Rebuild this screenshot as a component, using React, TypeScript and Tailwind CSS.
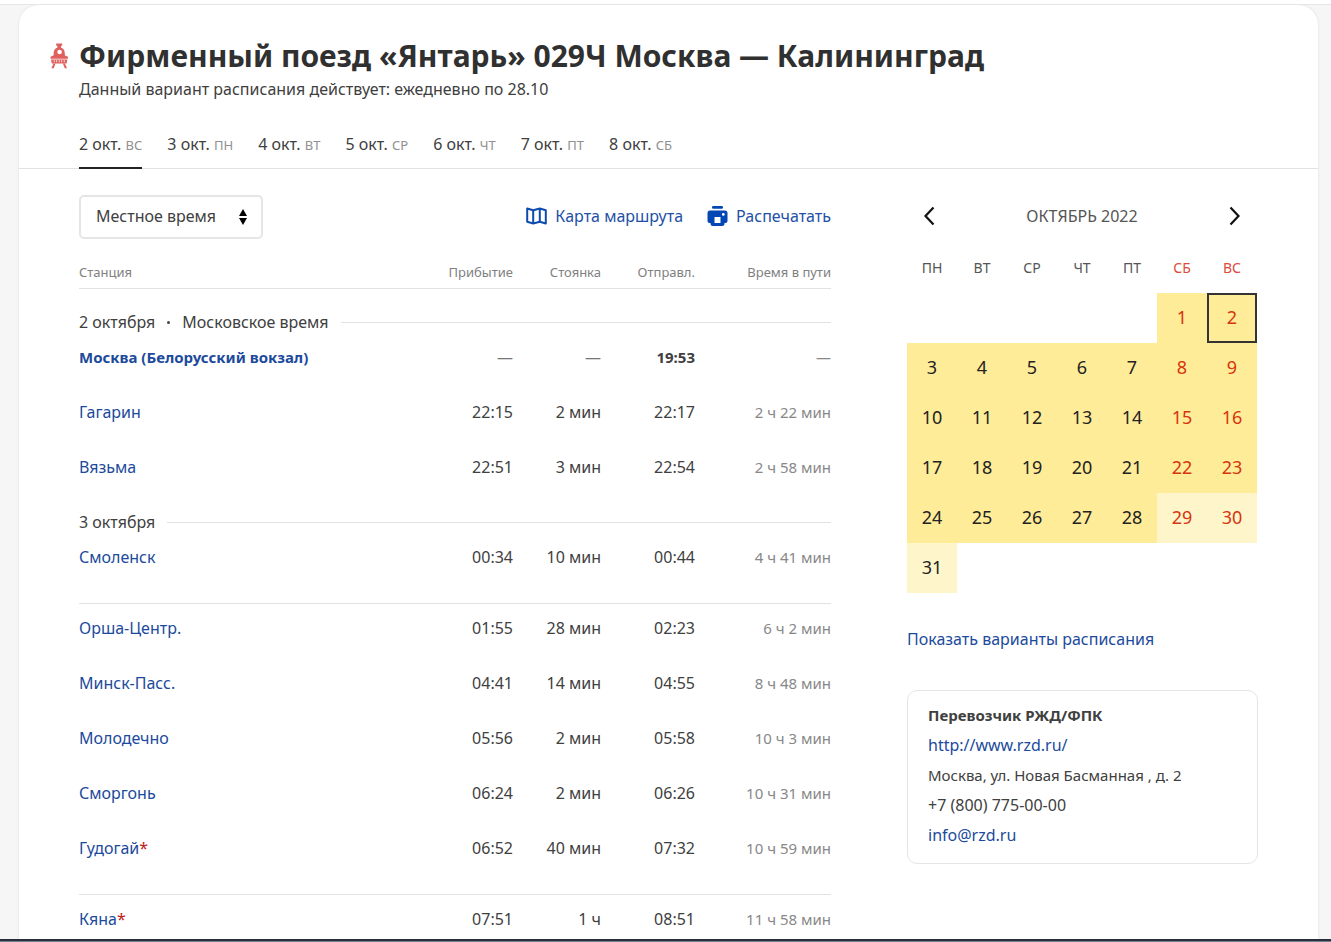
import { Fragment, useState, type ReactNode } from "react";

interface Stop {
  name: string;
  arrival: string;
  stay: string;
  departure: string;
  duration: string;
  main?: boolean;
  marked?: boolean;
}

interface StopGroup {
  date?: string;
  zone?: string;
  stops: Stop[];
}

const days = [
  { date: "2 окт.", weekday: "ВС" },
  { date: "3 окт.", weekday: "ПН" },
  { date: "4 окт.", weekday: "ВТ" },
  { date: "5 окт.", weekday: "СР" },
  { date: "6 окт.", weekday: "ЧТ" },
  { date: "7 окт.", weekday: "ПТ" },
  { date: "8 окт.", weekday: "СБ" },
];

const groups: StopGroup[] = [
  {
    date: "2 октября",
    zone: "Московское время",
    stops: [
      { name: "Москва (Белорусский вокзал)", arrival: "—", stay: "—", departure: "19:53", duration: "—", main: true },
      { name: "Гагарин", arrival: "22:15", stay: "2 мин", departure: "22:17", duration: "2 ч 22 мин" },
      { name: "Вязьма", arrival: "22:51", stay: "3 мин", departure: "22:54", duration: "2 ч 58 мин" },
    ],
  },
  {
    date: "3 октября",
    stops: [{ name: "Смоленск", arrival: "00:34", stay: "10 мин", departure: "00:44", duration: "4 ч 41 мин" }],
  },
  {
    stops: [
      { name: "Орша-Центр.", arrival: "01:55", stay: "28 мин", departure: "02:23", duration: "6 ч 2 мин" },
      { name: "Минск-Пасс.", arrival: "04:41", stay: "14 мин", departure: "04:55", duration: "8 ч 48 мин" },
      { name: "Молодечно", arrival: "05:56", stay: "2 мин", departure: "05:58", duration: "10 ч 3 мин" },
      { name: "Сморгонь", arrival: "06:24", stay: "2 мин", departure: "06:26", duration: "10 ч 31 мин" },
      { name: "Гудогай", arrival: "06:52", stay: "40 мин", departure: "07:32", duration: "10 ч 59 мин", marked: true },
    ],
  },
  {
    stops: [{ name: "Кяна", arrival: "07:51", stay: "1 ч", departure: "08:51", duration: "11 ч 58 мин", marked: true }],
  },
];

const weekdays = ["ПН", "ВТ", "СР", "ЧТ", "ПТ", "СБ", "ВС"];

// October 2022 starts on Saturday
const weeks = Array.from({ length: 6 }, (_, week) =>
  Array.from({ length: 7 }, (_, i) => {
    const day = week * 7 + i - 4;
    return day >= 1 && day <= 31 ? day : null;
  }),
);

function TrainIcon() {
  return (
    <svg className="h-7 w-5 shrink-0" viewBox="0 0 20 28" fill="#e0605e" aria-hidden="true">
      <path d="M7.200 1.500h6v2.200h-1.200v3H8.400v-3H7.200z" />
      <circle cx="10.200" cy="10.700" r="5.500" />
      <path d="M4.700 11h11v5h-11z" />
      <path d="M1.500 16.800v-2l3.200-1.600h11l3.200 1.600v2z" />
      <circle cx="10.600" cy="10" r="2.300" fill="#fff" />
      <path fillRule="evenodd" d="M2 17.600h16.400l-.8 4H2.800zM4.800 18.200v2h.8v-2zm2.500 0v2h.8v-2zm2.500 0v2h.8v-2zm2.500 0v2h.8v-2zm2.500 0v2h.8v-2z" />
      <path d="M4.500 21.500h2L4.700 26.300H2.400zM13.900 21.500h2l2.100 4.800h-2.300z" />
    </svg>
  );
}

function MapIcon() {
  return (
    <svg className="h-5 w-[21px]" viewBox="0 0 21 20" fill="none" stroke="#0d4cad" strokeWidth="2" strokeLinejoin="round" aria-hidden="true">
      <path d="M1.200 2.500l6 1.700 6.600-1.700 6 1.700v13.300l-6-1.700-6.600 1.700-6-1.700z" />
      <path d="M7.200 4.200v13.300M13.800 2.500v13.300" />
    </svg>
  );
}

function PrintIcon() {
  return (
    <svg className="h-5 w-[21px]" viewBox="0 0 21 20" fill="#0347b5" aria-hidden="true">
      <rect x="5" y="0" width="11" height="2.800" rx="1.200" />
      <path
        fillRule="evenodd"
        d="M3 4.500h15a2.500 2.500 0 0 1 2.500 2.500v8a2 2 0 0 1-2 2H17.500v.5a2.500 2.500 0 0 1-2.500 2.500H6A2.500 2.500 0 0 1 3.500 17.500V17h-1a2 2 0 0 1-2-2V7A2.500 2.500 0 0 1 3 4.500zm4.500 6.500V17h6v-6zM16.300 7a1.400 1.400 0 1 0 0 2.800 1.400 1.400 0 0 0 0-2.800z"
      />
    </svg>
  );
}

function Chevron({ path }: { path: string }) {
  return (
    <svg className="h-5 w-3" viewBox="0 0 12 20" fill="none" stroke="#111" strokeWidth="2.2" aria-hidden="true">
      <path d={path} />
    </svg>
  );
}

function Link({ href = "#", children }: { href?: string; children: ReactNode }) {
  return (
    <a href={href} className="text-[#1c4a9c] hover:text-red-600">
      {children}
    </a>
  );
}

function StopRow({ stop }: { stop: Stop }) {
  return (
    <tr className="h-[55px] text-right align-top">
      <th scope="row" className={`pt-[3px] text-left ${stop.main ? "text-[15px] leading-6 font-bold" : "font-normal"}`}>
        <Link>{stop.name}</Link>
        {stop.marked && <span className="text-[#c01818]">*</span>}
      </th>
      <td className={`pt-[3px] ${stop.main ? "text-[#777]" : ""}`}>{stop.arrival}</td>
      <td className={`pt-[3px] ${stop.main ? "text-[#777]" : ""}`}>{stop.stay}</td>
      <td className={`pt-[3px] ${stop.main ? "text-[15px] leading-6 font-bold" : ""}`}>{stop.departure}</td>
      <td className="pt-[3px] text-[15px] leading-6 text-[#888]">{stop.duration}</td>
    </tr>
  );
}

function Timetable() {
  return (
    <table className="mt-5 w-full table-fixed border-collapse">
      <colgroup>
        <col />
        <col className="w-[100px]" />
        <col className="w-[88px]" />
        <col className="w-[94px]" />
        <col className="w-[136px]" />
      </colgroup>
      <thead>
        <tr className="h-[29px] border-b border-[#e2e2e2] text-right align-top text-[13px] text-[#808080]">
          <th scope="col" className="pt-px text-left font-normal">Станция</th>
          <th scope="col" className="pt-px font-normal">Прибытие</th>
          <th scope="col" className="pt-px font-normal">Стоянка</th>
          <th scope="col" className="pt-px font-normal">Отправл.</th>
          <th scope="col" className="pt-px font-normal">Время в пути</th>
        </tr>
      </thead>
      <tbody>
        <tr className="h-[19px]" />
        {groups.map((group, i) => (
          <Fragment key={i}>
            <tr className={group.date ? "h-[35px] align-top" : "h-4 align-top"}>
              {group.date ? (
                <td colSpan={5} className="pt-[3px]">
                  <div className="flex items-center">
                    <span>{group.date}</span>
                    {group.zone && (
                      <>
                        <span className="mx-3 size-[3px] rounded-full bg-[#444]" />
                        <span>{group.zone}</span>
                      </>
                    )}
                    <span className="ml-3 h-px flex-1 bg-[#e2e2e2]" />
                  </div>
                </td>
              ) : (
                <td colSpan={5} className="pt-1.5">
                  <div className="h-px bg-[#e2e2e2]" />
                </td>
              )}
            </tr>
            {group.stops.map((stop) => (
              <StopRow key={stop.name} stop={stop} />
            ))}
          </Fragment>
        ))}
      </tbody>
    </table>
  );
}

function Calendar() {
  const [selected, setSelected] = useState(2);

  return (
    <div className="w-[350px]">
      <div className="flex h-[42px] items-center justify-between px-4">
        <button type="button" aria-label="Предыдущий месяц" className="cursor-pointer">
          <Chevron path="M10.500 1.500L2.500 10l8 8.500" />
        </button>
        <span className="text-[#555]">ОКТЯБРЬ 2022</span>
        <button type="button" aria-label="Следующий месяц" className="cursor-pointer">
          <Chevron path="M1.500 1.500l8 8.500-8 8.500" />
        </button>
      </div>
      <table className="mt-1.5 w-full table-fixed border-collapse text-center">
        <thead>
          <tr className="h-[50px] text-sm text-[#555]">
            {weekdays.map((name, i) => (
              <th key={name} scope="col" className={`font-normal ${i > 4 ? "text-[#dd4b3c]" : ""}`}>
                {name}
              </th>
            ))}
          </tr>
        </thead>
        <tbody>
          {weeks.map((week, w) => (
            <tr key={w} className="h-[50px]">
              {week.map((day, i) => (
                <td key={i} className="p-0">
                  {day && (
                    <button
                      type="button"
                      onClick={() => setSelected(day)}
                      className={`block h-[50px] w-full cursor-pointer border-2 pb-0.5 text-lg ${day > 28 ? "bg-[#fff5cb]" : "bg-[#ffec98]"} ${i > 4 ? "text-[#d5350f]" : "text-[#222]"} ${day === selected ? "border-[#333]" : "border-transparent"}`}
                    >
                      {day}
                    </button>
                  )}
                </td>
              ))}
            </tr>
          ))}
        </tbody>
      </table>
    </div>
  );
}

export default function App() {
  const [activeDay, setActiveDay] = useState(0);

  return (
    <div className="flex h-screen flex-col overflow-hidden bg-[#f6f6f6] font-['Noto_Sans',sans-serif] text-base leading-6 text-[#404040]">
      <div className="h-[5px] shrink-0 border-b border-[#e6e6e6] bg-white" />
      <div className="min-h-0 flex-1 overflow-hidden pr-[13px] pl-[19px]">
        <main className="min-h-full rounded-t-[20px] bg-white shadow-[0_0_3px_rgba(0,0,0,0.1)]">
          <header className="flex items-start gap-2.5 pt-[31px] pl-[30px]">
            <div className="pt-1.5">
              <TrainIcon />
            </div>
            <div>
              <h1 className="text-[30px] leading-10 font-bold text-[#303030]">
                Фирменный поезд «Янтарь» 029Ч Москва — Калининград
              </h1>
              <p className="mt-px">Данный вариант расписания действует: ежедневно по 28.10</p>
            </div>
          </header>

          <nav className="mt-[31px] flex gap-[25px] border-b border-[#e2e2e2] px-[60px]">
            {days.map((day, i) => (
              <button
                key={day.date}
                type="button"
                onClick={() => setActiveDay(i)}
                className={`-mb-px cursor-pointer border-b-2 pb-2.5 ${i === activeDay ? "border-[#222]" : "border-transparent"}`}
              >
                {day.date} <span className="text-[13px] text-[#909090]">{day.weekday}</span>
              </button>
            ))}
          </nav>

          <div className="grid grid-cols-[1fr_351px] gap-[76px] px-[60px] pt-[26px]">
            <section>
              <div className="flex items-center justify-between">
                <div className="relative">
                  <select
                    aria-label="Время"
                    className="h-11 w-[184px] cursor-pointer appearance-none rounded-[5px] border-2 border-[#e5e5e5] bg-white px-[15px] pb-0.5"
                  >
                    <option>Местное время</option>
                    <option>Московское время</option>
                  </select>
                  <svg className="pointer-events-none absolute top-3.5 right-4 h-4 w-2" viewBox="0 0 8 16" aria-hidden="true">
                    <path d="M4 0l4 7H0zM4 16l4-7H0z" />
                  </svg>
                </div>
                <div className="flex items-center gap-6 pb-0.5 text-[#2350a6]">
                  <a href="#" className="flex items-center gap-2">
                    <MapIcon />
                    Карта маршрута
                  </a>
                  <button type="button" className="flex cursor-pointer items-center gap-2">
                    <PrintIcon />
                    Распечатать
                  </button>
                </div>
              </div>
              <Timetable />
            </section>

            <aside>
              <Calendar />
              <p className="mt-[34px]">
                <Link>Показать варианты расписания</Link>
              </p>
              <address className="mt-[39px] flex flex-col gap-1.5 rounded-[10px] border border-[#e5e5e5] px-5 pt-3 pb-4 not-italic">
                <strong className="text-[15px] leading-6">Перевозчик РЖД/ФПК</strong>
                <Link href="http://www.rzd.ru/">http://www.rzd.ru/</Link>
                <span className="text-[15px] leading-6">Москва, ул. Новая Басманная , д. 2</span>
                <span>+7 (800) 775-00-00</span>
                <Link href="mailto:info@rzd.ru">info@rzd.ru</Link>
              </address>
            </aside>
          </div>
        </main>
      </div>
      <div className="h-[3px] shrink-0 border-b border-[#777e86] bg-[#25303c]" />
    </div>
  );
}
